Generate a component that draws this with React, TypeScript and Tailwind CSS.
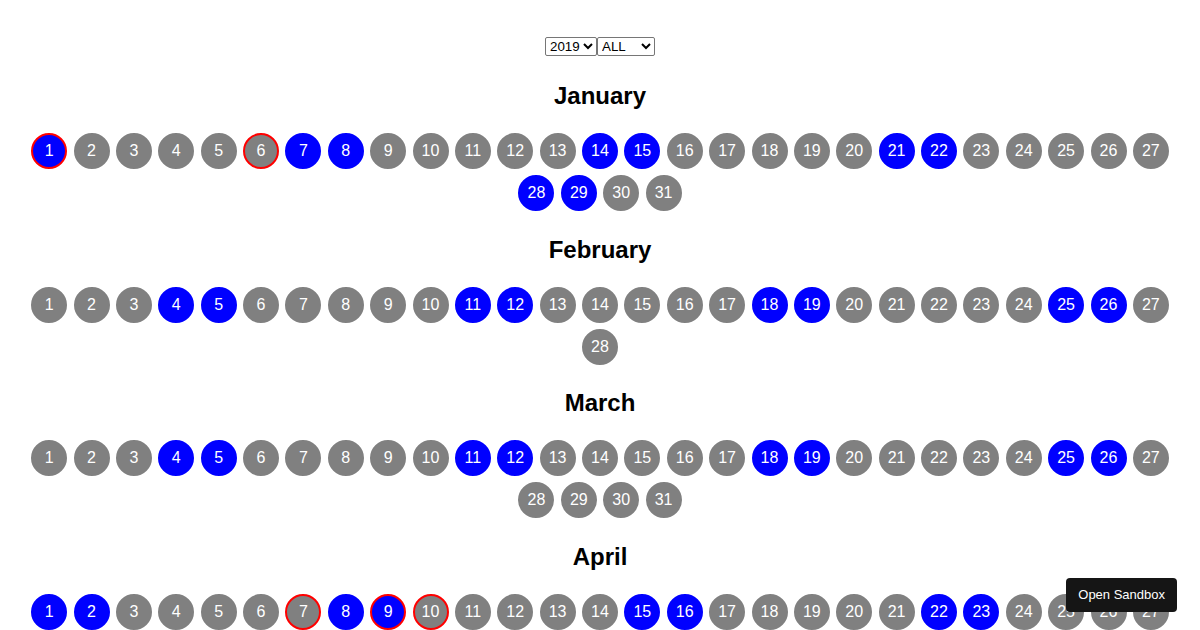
import React from "react";

const MONTHS = ["January","February","March","April","May","June","July","August","September","October","November","December"];
const RED: Record<number, number[]> = { 0: [1, 6], 3: [7, 9, 10] };

function Month({ m }: { m: number }) {
  const days = new Date(2019, m + 1, 0).getDate();
  const items = [];
  for (let d = 1; d <= days; d++) {
    const wd = new Date(2019, m, d).getDay();
    const blue = wd === 1 || wd === 2;
    const red = (RED[m] || []).includes(d);
    items.push(
      <div
        key={d}
        className={`w-9 h-9 rounded-full border-2 flex items-center justify-center text-white text-[16px] ${blue ? "bg-[#0000ff]" : "bg-[#808080]"} ${red ? "border-[#ff0000]" : blue ? "border-[#0000ff]" : "border-[#808080]"}`}
      >
        {d}
      </div>
    );
  }
  return (
    <div className="flex flex-col items-center">
      <h2 className="text-[24px] leading-[32px] font-bold text-black">{MONTHS[m]}</h2>
      <div className="mt-[21px] mb-[22.5px] px-[20px] flex flex-wrap justify-center gap-x-[6.38px] gap-y-[6px] w-full">
        {items}
      </div>
    </div>
  );
}

export default function App() {
  return (
    <div className="min-h-[630px] bg-white pt-[37px]" style={{ fontFamily: '"Liberation Sans", Arial, sans-serif' }}>
      <div className="flex justify-center">
        <select defaultValue="2019" className="h-[19px] text-[13.33px] border border-[#767676] rounded-[2px] bg-white text-black">
          <option>2018</option>
          <option>2019</option>
          <option>2020</option>
        </select>
        <select defaultValue="ALL" className="w-[58px] h-[19px] text-[13.33px] border border-[#767676] rounded-[2px] bg-white text-black">
          <option>ALL</option>
          <option>WORK</option>
          <option>FREE</option>
        </select>
      </div>
      <div className="mt-[24px]">
        {MONTHS.map((_, i) => (
          <Month key={i} m={i} />
        ))}
      </div>
      <button className="fixed right-[23px] bottom-[18px] h-[34px] px-[12px] rounded-[4px] bg-[#151515] text-white text-[13px]">
        Open Sandbox
      </button>
    </div>
  );
}
